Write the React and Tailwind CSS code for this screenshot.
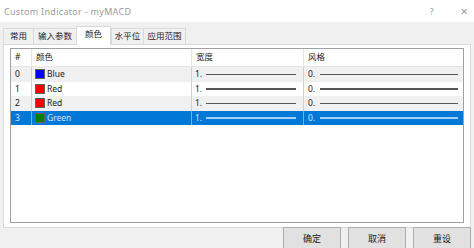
import React from 'react';

const rows = [
  { id: 0, name: 'Blue', color: '#0000ff', bg: 'bg-[#f0f0f0]' },
  { id: 1, name: 'Red', color: '#ff0000', bg: 'bg-white' },
  { id: 2, name: 'Red', color: '#ff0000', bg: 'bg-[#f0f0f0]' },
  { id: 3, name: 'Green', color: '#008000', bg: 'bg-[#0078d7]', selected: true },
];

const tabs = [
  { t: '常用', w: 'w-[30px]' },
  { t: '输入参数', w: 'w-[43px]' },
  { t: '颜色', w: 'w-[35px]', active: true },
  { t: '水平位', w: 'w-[32px]' },
  { t: '应用范围', w: 'w-[43px] border-r' },
];

export default function App() {
  return (
    <div className="w-[474px] h-[248px] overflow-hidden bg-[#f0f0f0] text-[8.5px] leading-none text-[#1a1a1a] font-['Noto_Sans','Noto_Sans_CJK_SC',sans-serif]">
      {/* title bar */}
      <div className="h-[22px] bg-white flex items-center pl-[4px] pr-[6px]">
        <span className="text-[9px] text-[#9a9a9a] tracking-[0.3px]">Custom Indicator - myMACD</span>
        <span className="ml-auto text-[9px] text-[#9a9a9a] mr-[27px]">?</span>
        <span className="text-[13px] leading-none text-[#9a9a9a]">×</span>
      </div>

      {/* tabs */}
      <div className="flex items-end h-[22px] pl-[3px]">
        {tabs.map((tab) =>
          tab.active ? (
            <div key={tab.t} className={`${tab.w} h-[19px] bg-white border-x border-t border-[#d9d9d9] flex items-center justify-center whitespace-nowrap -mb-px relative z-10 pb-[3px]`}>
              {tab.t}
            </div>
          ) : (
            <div key={tab.t} className={`${tab.w} h-[16px] border-t border-l border-[#d9d9d9] flex items-center justify-center whitespace-nowrap`}>
              {tab.t}
            </div>
          )
        )}
      </div>

      {/* panel */}
      <div className="mx-[3px] h-[184px] bg-white border border-[#d9d9d9] pt-[3px] px-[6px]">
        <div className="h-[175px] border border-[#a0a0a0] bg-white">
          {/* header */}
          <div className="flex h-[18px] items-center border-b border-[#e5e5e5]">
            <div className="w-[21px] pl-[4px] border-r border-[#e5e5e5] h-full flex items-center">#</div>
            <div className="w-[160px] pl-[4px] border-r border-[#e5e5e5] h-full flex items-center">颜色</div>
            <div className="w-[112px] pl-[4px] border-r border-[#e5e5e5] h-full flex items-center">宽度</div>
            <div className="flex-1 pl-[4px] h-full flex items-center">风格</div>
          </div>
          {rows.map((r) => {
            const div = r.selected ? 'border-[#6fb0e6]' : 'border-[#d0d0d0]';
            const line = r.selected ? 'bg-[#9fd0f5]' : 'bg-[#555555]';
            return (
              <div key={r.id} className={`flex h-[14.5px] items-center ${r.bg} ${r.selected ? 'text-[#cfe6fa]' : ''}`}>
                <div className={`w-[21px] pl-[4px] h-full flex items-center border-r ${div}`}>{r.id}</div>
                <div className={`w-[160px] pl-[3px] h-full flex items-center gap-[2px] border-r ${div}`}>
                  <span className="w-[10px] h-[10px] border border-[#606060]" style={{ backgroundColor: r.color }} />
                  <span>{r.name}</span>
                </div>
                <div className={`w-[112px] pl-[3px] pr-[7px] h-full flex items-center border-r ${div}`}>
                  <span>1.</span>
                  <span className={`ml-[4px] flex-1 h-[1.5px] ${line}`} />
                </div>
                <div className="flex-1 pl-[4px] pr-[5px] h-full flex items-center">
                  <span>0.</span>
                  <span className={`ml-[5px] flex-1 h-[1.5px] ${line}`} />
                </div>
              </div>
            );
          })}
        </div>
      </div>

      {/* buttons */}
      <div className="flex justify-end gap-[7px] pr-[3px] -mt-px">
        {['确定', '取消', '重设'].map((b) => (
          <div key={b} className="w-[58px] h-[22px] bg-[#e1e1e1] border border-[#adadad] flex items-center justify-center text-[9px]">
            {b}
          </div>
        ))}
      </div>
    </div>
  );
}
